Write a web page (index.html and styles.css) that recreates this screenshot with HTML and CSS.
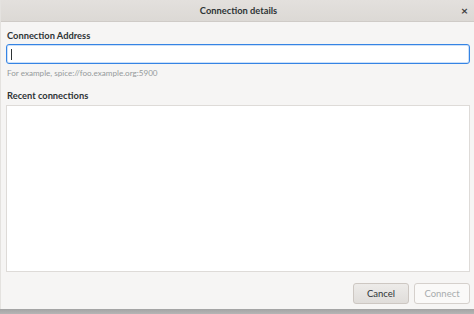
FILE: index.html
```html
<!DOCTYPE html>
<html>
<head>
<meta charset="utf-8">
<link rel="stylesheet" href="styles.css">
</head>
<body>
<div class="window">
  <div class="titlebar">
    <span class="title">Connection details</span>
    <span class="close">×</span>
  </div>
  <div class="content">
    <div class="label">Connection Address</div>
    <div class="entry"><span class="caret"></span></div>
    <div class="hint">For example, spice://foo.example.org:5900</div>
    <div class="label recent">Recent connections</div>
    <div class="list"></div>
    <div class="actions">
      <button class="btn">Cancel</button>
      <button class="btn disabled">Connect</button>
    </div>
  </div>
</div>
<div class="shadow"></div>
</body>
</html>
```
FILE: styles.css
```css
html, body {
  margin: 0;
  padding: 0;
}
body {
  width: 474px;
  height: 314px;
  overflow: hidden;
  background: #f6f5f4;
  font-family: Lato, "Open Sans", sans-serif;
  color: #2e3436;
}
.window {
  height: 309px;
  display: flex;
  flex-direction: column;
  background: #f6f5f4;
  border-left: 1px solid #e4e2df;
  box-sizing: border-box;
}
.titlebar {
  height: 22px;
  flex: none;
  box-sizing: border-box;
  background: linear-gradient(#e3e0dd, #dcd9d5);
  border-bottom: 1px solid #cfcbc7;
  position: relative;
  display: flex;
  align-items: center;
  justify-content: center;
}
.title {
  font-weight: 700;
  font-size: 9.3px;
  color: #2e3436;
  padding-left: 2px;
}
.close {
  position: absolute;
  right: 6px;
  top: 3px;
  font-size: 12px;
  font-weight: 700;
  color: #3d3d3d;
  line-height: 16px;
}
.content {
  flex: 1;
  display: flex;
  flex-direction: column;
  padding: 0 4px 0 5px;
}
.label {
  font-weight: 700;
  font-size: 9.3px;
  line-height: 13px;
  margin-top: 7px;
  padding-left: 1px;
  color: #2e3436;
}
.entry {
  margin-top: 2px;
  height: 20px;
  box-sizing: border-box;
  border: 1px solid #3584e4;
  box-shadow: inset 0 0 0 1px rgba(53,132,228,0.25);
  border-radius: 3px;
  background: #fff;
  display: flex;
  align-items: center;
  padding-left: 4px;
}
.caret {
  width: 1px;
  height: 11px;
  background: #2e3436;
}
.hint {
  font-size: 8.1px;
  line-height: 11px;
  color: #959a9b;
  margin-top: 4px;
  padding-left: 1px;
}
.recent {
  margin-top: 10px;
}
.list {
  margin-top: 3px;
  height: 167px;
  box-sizing: border-box;
  background: #fff;
  border: 1px solid #dedbd8;
}
.actions {
  margin-top: 11px;
  display: flex;
  justify-content: flex-end;
  gap: 5px;
}
.btn {
  width: 56px;
  height: 21px;
  box-sizing: border-box;
  border: 1px solid #cdc7c2;
  border-radius: 3px;
  background: linear-gradient(#edebe9, #e0ddda);
  font-family: Lato, "Open Sans", sans-serif;
  font-size: 9.5px;
  color: #2e3436;
  padding: 0;
}
.btn.disabled {
  background: #faf9f8;
  border-color: #d5d0cc;
  color: #a8acad;
}
.shadow {
  height: 5px;
  background: linear-gradient(#a3a3a3, #b5b5b5);
}
```
